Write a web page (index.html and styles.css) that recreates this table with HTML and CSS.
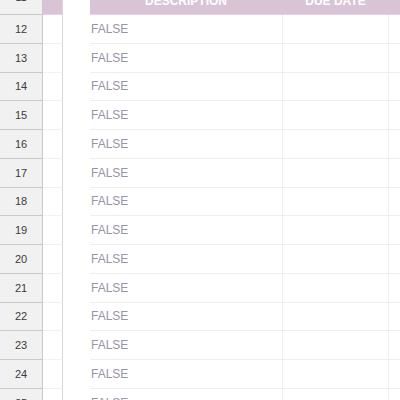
FILE: index.html
```html
<!DOCTYPE html>
<html>
<head>
<meta charset="utf-8">
<link rel="stylesheet" href="styles.css">
</head>
<body>
<div class="sheet">
  <div class="row head">
    <div class="rh">11</div>
    <div class="fz"></div>
    <div class="gap"></div>
    <div class="c desc">DESCRIPTION</div>
    <div class="c due">DUE DATE</div>
    <div class="c rest"></div>
  </div>
  <div class="row"><div class="rh">12</div><div class="fz"></div><div class="gap"></div><div class="c desc">FALSE</div><div class="c due"></div><div class="c rest"></div></div>
  <div class="row"><div class="rh">13</div><div class="fz"></div><div class="gap"></div><div class="c desc">FALSE</div><div class="c due"></div><div class="c rest"></div></div>
  <div class="row"><div class="rh">14</div><div class="fz"></div><div class="gap"></div><div class="c desc">FALSE</div><div class="c due"></div><div class="c rest"></div></div>
  <div class="row"><div class="rh">15</div><div class="fz"></div><div class="gap"></div><div class="c desc">FALSE</div><div class="c due"></div><div class="c rest"></div></div>
  <div class="row"><div class="rh">16</div><div class="fz"></div><div class="gap"></div><div class="c desc">FALSE</div><div class="c due"></div><div class="c rest"></div></div>
  <div class="row"><div class="rh">17</div><div class="fz"></div><div class="gap"></div><div class="c desc">FALSE</div><div class="c due"></div><div class="c rest"></div></div>
  <div class="row"><div class="rh">18</div><div class="fz"></div><div class="gap"></div><div class="c desc">FALSE</div><div class="c due"></div><div class="c rest"></div></div>
  <div class="row"><div class="rh">19</div><div class="fz"></div><div class="gap"></div><div class="c desc">FALSE</div><div class="c due"></div><div class="c rest"></div></div>
  <div class="row"><div class="rh">20</div><div class="fz"></div><div class="gap"></div><div class="c desc">FALSE</div><div class="c due"></div><div class="c rest"></div></div>
  <div class="row"><div class="rh">21</div><div class="fz"></div><div class="gap"></div><div class="c desc">FALSE</div><div class="c due"></div><div class="c rest"></div></div>
  <div class="row"><div class="rh">22</div><div class="fz"></div><div class="gap"></div><div class="c desc">FALSE</div><div class="c due"></div><div class="c rest"></div></div>
  <div class="row"><div class="rh">23</div><div class="fz"></div><div class="gap"></div><div class="c desc">FALSE</div><div class="c due"></div><div class="c rest"></div></div>
  <div class="row"><div class="rh">24</div><div class="fz"></div><div class="gap"></div><div class="c desc">FALSE</div><div class="c due"></div><div class="c rest"></div></div>
  <div class="row"><div class="rh">25</div><div class="fz"></div><div class="gap"></div><div class="c desc">FALSE</div><div class="c due"></div><div class="c rest"></div></div>
</div>
</body>
</html>
```
FILE: styles.css
```css
html, body {
  margin: 0;
  padding: 0;
  background: #ffffff;
  overflow: hidden;
}
body {
  font-family: "Liberation Sans", Arial, sans-serif;
}
.sheet {
  margin-top: -21px;
  display: flex;
  flex-direction: column;
  width: 400px;
}
.row {
  display: flex;
  height: 28.75px;
  flex: none;
}
.row.head {
  height: 36px;
}
.rh {
  box-sizing: border-box;
  width: 43px;
  flex: none;
  background: #f1f1f1;
  border-right: 1px solid #c9c9c9;
  border-bottom: 1px solid #c9c9c9;
  display: flex;
  align-items: center;
  justify-content: center;
  font-size: 11px;
  color: #3a3a3a;
}
.fz {
  box-sizing: border-box;
  width: 20px;
  flex: none;
  border-right: 1px solid #d6d6d6;
  border-bottom: 1px solid #f1f1f1;
}
.gap {
  width: 27px;
  flex: none;
}
.c {
  box-sizing: border-box;
  flex: none;
  border-bottom: 1px solid #eeeeee;
  display: flex;
  align-items: center;
  font-size: 12px;
  color: #9a92a8;
}
.desc {
  width: 193px;
  padding-left: 1px;
  border-right: 1px solid #efefef;
}
.due {
  width: 106px;
  border-right: 1px solid #efefef;
}
.rest {
  flex: 1;
}
.head .fz,
.head .c {
  background: #d9c4d5;
  border-bottom: 1px solid #e4d3e1;
  border-right-color: #d9c4d5;
}
.head .fz {
  border-right: 1px solid #d6d6d6;
}
.head .c {
  align-items: flex-end;
  justify-content: center;
  padding-bottom: 6px;
  line-height: 14px;
  font-weight: bold;
  color: #ffffff;
}
.head .desc {
  padding-left: 0;
}
```
